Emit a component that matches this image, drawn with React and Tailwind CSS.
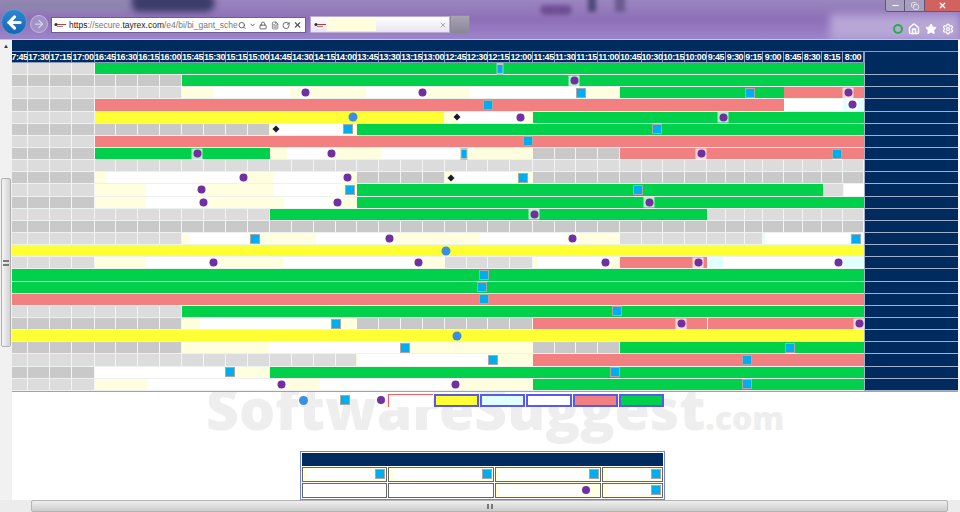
import React from 'react';
import { ArrowLeft, ArrowRight, Search, ChevronDown, Lock, FileText, RotateCw, X, Home, Star, Settings, Minus, Copy } from 'lucide-react';

const TIMES = ['7:45','17:30','17:15','17:00','16:45','16:30','16:15','16:00','15:45','15:30','15:15','15:00','14:45','14:30','14:15','14:00','13:45','13:30','13:15','13:00','12:45','12:30','12:15','12:00','11:45','11:30','11:15','11:00','10:45','10:30','10:15','10:00','9:45','9:30','9:15','9:00','8:45','8:30','8:15','8:00'];
const EDGES = [12,28,50,72,95,116,138,160,182,204,226,248,270,292,314,336,357,379,401,423,445,467,488,510,533,555,576,598,620,642,663,685,707,726,745,763,784,803,822,843,864];

const COLORS = {
  g: 'bg-[#00d04a]',
  r: 'bg-[#f28080]',
  y: 'bg-[#ffff33]',
  c: 'bg-[#ffffe0]',
  w: 'bg-white',
  a: 'bg-[#e0ffff]',
};

// each row: bars as [end x, colour] (x = grey cells), marks as [centre x, kind]
const ROWS = [
  { bars: [[95,'x'],[864,'g']], marks: [[500,'n']] },
  { bars: [[182,'x'],[864,'g']], marks: [[574,'p']] },
  { bars: [[182,'x'],[214,'c'],[290,'w'],[366,'c'],[418,'w'],[470,'c'],[576,'w'],[620,'c'],[784,'g'],[864,'r']], marks: [[305,'p'],[422,'p'],[581,'s'],[750,'s'],[848,'p']] },
  { bars: [[95,'x'],[784,'r'],[843,'w'],[864,'a']], marks: [[488,'s'],[852,'p']] },
  { bars: [[95,'x'],[444,'y'],[458,'c'],[524,'w'],[533,'c'],[864,'g']], marks: [[353,'b'],[457,'d'],[520,'p'],[723,'p']] },
  { bars: [[270,'x'],[273,'c'],[344,'w'],[357,'c'],[864,'g']], marks: [[276,'d'],[348,'s'],[657,'s']] },
  { bars: [[95,'x'],[864,'r']], marks: [[528,'s']] },
  { bars: [[95,'x'],[270,'g'],[287,'c'],[327,'w'],[381,'c'],[461,'w'],[533,'c'],[620,'x'],[864,'r']], marks: [[197,'p'],[331,'p'],[464,'n'],[701,'p'],[837,'s']] },
  { bars: [[864,'x']], marks: [] },
  { bars: [[95,'x'],[105,'c'],[240,'w'],[273,'c'],[342,'w'],[357,'c'],[445,'x'],[453,'c'],[516,'w'],[533,'c'],[864,'x']], marks: [[243,'p'],[347,'p'],[451,'d'],[523,'s']] },
  { bars: [[95,'x'],[146,'c'],[198,'w'],[273,'c'],[342,'w'],[357,'c'],[823,'g'],[864,'x']], marks: [[201,'p'],[350,'s'],[638,'s']] },
  { bars: [[95,'x'],[146,'c'],[198,'w'],[284,'c'],[332,'w'],[357,'c'],[864,'g']], marks: [[203,'p'],[337,'p'],[649,'p']] },
  { bars: [[270,'x'],[707,'g'],[864,'x']], marks: [[534,'p']] },
  { bars: [[864,'x']], marks: [] },
  { bars: [[182,'x'],[189,'c'],[250,'w'],[316,'c'],[385,'w'],[480,'c'],[565,'w'],[620,'c'],[763,'x'],[765,'a'],[850,'w'],[864,'a']], marks: [[255,'s'],[389,'p'],[572,'p'],[856,'s']] },
  { bars: [[864,'y']], marks: [[446,'b']] },
  { bars: [[95,'x'],[146,'c'],[208,'w'],[283,'c'],[412,'w'],[445,'c'],[533,'x'],[538,'c'],[600,'w'],[620,'c'],[707,'r'],[723,'a'],[835,'w'],[864,'a']], marks: [[213,'p'],[418,'p'],[605,'p'],[698,'p'],[838,'p']] },
  { bars: [[864,'g']], marks: [[484,'s']] },
  { bars: [[864,'g']], marks: [[482,'s']] },
  { bars: [[864,'r']], marks: [[484,'s']] },
  { bars: [[182,'x'],[864,'g']], marks: [[617,'s']] },
  { bars: [[182,'x'],[200,'c'],[330,'w'],[357,'c'],[533,'x'],[707,'r'],[708,'w'],[864,'r']], marks: [[336,'s'],[681,'p'],[859,'p']] },
  { bars: [[864,'y']], marks: [[457,'b']] },
  { bars: [[182,'x'],[269,'c'],[400,'w'],[533,'c'],[620,'x'],[864,'g']], marks: [[405,'s'],[790,'s']] },
  { bars: [[357,'x'],[360,'c'],[490,'w'],[533,'c'],[864,'r']], marks: [[493,'s'],[747,'s']] },
  { bars: [[95,'x'],[225,'w'],[270,'c'],[864,'g']], marks: [[230,'s'],[615,'s']] },
  { bars: [[95,'x'],[147,'c'],[275,'w'],[320,'c'],[450,'w'],[533,'c'],[864,'g']], marks: [[281,'p'],[455,'p'],[747,'s']] },
];

const Purple = () => (
  <span className="flex w-[11px] h-[11px] items-center justify-center bg-white/70">
    <span className="block w-[8px] h-[8px] rounded-full bg-[#7030a0]" />
  </span>
);
const Square = () => (
  <span className="flex w-[10px] h-[10px] items-center justify-center bg-[#a8a8a8]">
    <span className="block w-[8px] h-[8px] bg-[#00aef0]" />
  </span>
);
const Narrow = () => (
  <span className="flex w-[7px] h-[12px] items-center justify-center bg-[#c0c0c0]">
    <span className="block w-[5px] h-[8px] bg-[#00aef0]" />
  </span>
);
const BlueDot = () => <span className="block w-[9px] h-[9px] rounded-full bg-[#3b8fe3]" />;
const Diamond = () => <span className="block w-[5px] h-[5px] rotate-45 bg-[#1a1a2a]" />;

const MARKS = { p: Purple, s: Square, n: Narrow, b: BlueDot, d: Diamond };

const GanttRow = ({ row, index }) => {
  const lightGrey = index % 2 === 0;
  const pieces = [];
  let from = 12;
  row.bars.forEach(([to, kind]) => {
    if (kind === 'x') {
      EDGES.forEach((e, i) => {
        const next = EDGES[i + 1];
        if (next && e >= from && next <= to) {
          pieces.push(
            <div key={`x${e}`} className={`h-full border-r border-[#f4f4f4] ${lightGrey ? 'bg-[#dcdcdc]' : 'bg-[#c9c9c9]'}`} style={{ width: next - e }} />
          );
        }
      });
    } else {
      pieces.push(<div key={`b${to}`} className={`h-full ${COLORS[kind]}`} style={{ width: to - from }} />);
    }
    from = to;
  });

  return (
    <div className="flex h-[12.15px]">
      <div className="relative flex w-[852px] border-b border-[#eef2ee]">
        {pieces}
        {row.marks.map(([x, kind]) => {
          const Mark = MARKS[kind];
          return (
            <span key={x} className="absolute top-1/2 -translate-x-1/2 -translate-y-1/2" style={{ left: x - 12 }}>
              <Mark />
            </span>
          );
        })}
      </div>
      <div className="flex-1 bg-[#002b5e] border-l border-b border-[#a3b0cc]" />
    </div>
  );
};

const Favicon = () => (
  <svg width="12" height="6" viewBox="0 0 12 6" className="shrink-0">
    <circle cx="2" cy="2.5" r="1.6" fill="#333" />
    <path d="M3 2.5H12" stroke="#c0392b" strokeWidth="1" />
    <path d="M3 4.5H9" stroke="#888" strokeWidth="1" />
  </svg>
);

const BrowserBar = () => (
  <header className="relative flex h-[40px] shrink-0 items-end overflow-hidden border-b border-[#cdbfe6] bg-gradient-to-b from-[#9a86bf] via-[#8e6fb8] to-[#9d84c8] pb-[4px] pl-[1px]">
    {/* blurred desktop behind the glass */}
    <div className="absolute left-[130px] top-[-6px] h-[18px] w-[85px] rounded-full bg-[#3d3c69] blur-[3px]" />
    <div className="absolute left-[0px] top-[0px] h-[10px] w-[130px] bg-[#8c86a8] blur-[4px]" />
    <div className="absolute left-[540px] top-[5px] h-[10px] w-[32px] rounded-full bg-[#6f4f96] blur-[2px]" />
    <div className="absolute left-[588px] top-[-4px] h-[16px] w-[8px] bg-[#4d4a78] blur-[2px]" />
    <div className="absolute left-[615px] top-[-4px] h-[16px] w-[10px] bg-[#6a5a8c] blur-[2px]" />
    <div className="absolute right-[0px] top-[14px] h-[26px] w-[130px] bg-[#b7a6d6] blur-[4px]" />

    <div className="relative flex h-[26px] w-[26px] shrink-0 items-center justify-center rounded-full border border-[#5a9fd0] bg-gradient-to-b from-[#2f86cf] to-[#1766b4]">
      <ArrowLeft size={19} strokeWidth={4} className="text-white" />
    </div>
    <div className="relative mb-[2px] ml-[3px] flex h-[18px] w-[18px] shrink-0 items-center justify-center rounded-full border border-[#c4b6de] bg-[#a392c6]">
      <ArrowRight size={12} strokeWidth={2.5} className="text-[#d9d0ea]" />
    </div>
    <div className="relative mb-[2px] ml-[3px] flex h-[16px] w-[255px] shrink-0 items-center border border-[#6f5f90] bg-white pl-[2px] pr-[3px]">
      <Favicon />
      <span className="ml-[3px] w-[166px] shrink-0 whitespace-nowrap font-['Liberation_Sans',sans-serif] text-[8.5px] leading-none text-[#777]">
        <span className="text-[#222]">https</span>://secure.<span className="text-[#222]">tayrex.com</span>/e4/bi/bi_gant_sche
      </span>
      <Search size={9} strokeWidth={2.5} className="ml-[3px] text-[#555]" />
      <ChevronDown size={8} strokeWidth={3} className="ml-[3px] text-[#555]" />
      <Lock size={9} strokeWidth={2.5} className="ml-[3px] text-[#555]" />
      <FileText size={9} strokeWidth={2} className="ml-[3px] text-[#555]" />
      <RotateCw size={9} strokeWidth={2.5} className="ml-[3px] text-[#555]" />
      <X size={10} strokeWidth={3} className="ml-[3px] text-[#555]" />
    </div>
    <div className="relative mb-[2px] ml-[4px] flex h-[17px] w-[140px] shrink-0 items-center border border-[#b9acd6] bg-gradient-to-b from-white to-[#e8e4f2] pl-[3px] pr-[2px]">
      <Favicon />
      <div className="ml-[1px] h-[13px] w-[49px] bg-[#ffffe0]" />
      <X size={8} strokeWidth={3} className="ml-auto text-[#aaa]" />
    </div>
    <div className="relative mb-[1px] h-[19px] w-[20px] shrink-0 border border-[#8f88a4] bg-gradient-to-b from-[#a8a4b0] to-[#8a8698]" />

    <div className="absolute right-0 top-0 flex h-[12px] w-[75px] overflow-hidden rounded-bl-[3px] border-b border-l border-[#5e5878]">
      <div className="flex w-[19px] items-center justify-center border-r border-[#5e5878] bg-[#a89fc0]"><Minus size={9} strokeWidth={3} className="text-white" /></div>
      <div className="flex w-[20px] items-center justify-center border-r border-[#5e5878] bg-[#a89fc0]"><Copy size={8} strokeWidth={2} className="text-white" /></div>
      <div className="flex flex-1 items-center justify-center bg-[#d0625f]"><X size={9} strokeWidth={3.5} className="text-white" /></div>
    </div>
    <div className="absolute right-[6px] top-[23px] flex items-center gap-[5px]">
      <span className="block h-[10px] w-[10px] rounded-full border-2 border-[#22b14c]" />
      <Home size={12} strokeWidth={3} className="text-white" />
      <Star size={12} fill="white" className="text-white" />
      <Settings size={12} strokeWidth={2.5} className="text-white" />
    </div>
  </header>
);

const HeaderRow = () => (
  <div className="flex h-[12px] bg-[#002b5e]">
    {TIMES.map((t, i) => (
      <div
        key={t}
        className="flex items-center justify-center border border-l-0 border-[#8c9cbc] font-['Liberation_Sans',sans-serif] text-[9px] font-bold leading-none tracking-[-0.4px] text-white whitespace-nowrap"
        style={{ width: EDGES[i + 1] - EDGES[i] }}
      >
        {t}
      </div>
    ))}
    <div className="flex-1 border-t border-l border-[#8c9cbc]" />
  </div>
);

const LegendBox = ({ className }) => <div className={`h-[13px] w-[45px] border-2 border-[#5a5ae8] ${className}`} />;

const Legend = () => (
  <div className="ml-[287px] mt-[2px] flex items-center">
    <BlueDot />
    <span className="ml-[32px]"><Square /></span>
    <span className="ml-[25px]"><Purple /></span>
    <div className="ml-[2px] flex gap-[1px]">
      <div className="h-[13px] w-[45px] border-l border-t border-[#f06060] bg-white" />
      <LegendBox className="bg-[#ffff33]" />
      <LegendBox className="bg-[#e0ffff]" />
      <LegendBox className="w-[46px] bg-white" />
      <LegendBox className="bg-[#f28080]" />
      <LegendBox className="bg-[#00d04a]" />
    </div>
  </div>
);

const SummaryCell = ({ w, patch, mark, inset = 1 }) => {
  const Mark = mark ? MARKS[mark] : null;
  return (
    <div className={`flex h-[15px] items-center justify-end border border-[#666] ${patch ? 'bg-[#ffffe0]' : 'bg-white'}`} style={{ width: w, paddingRight: inset }}>
      {patch && <div className="mr-auto ml-[4px] h-[9px] flex-1 bg-white" />}
      {Mark && <Mark />}
    </div>
  );
};

const SummaryTable = () => (
  <div className="ml-[288px] mt-[44px] w-[365px] border border-[#6f86d6] p-[1px]">
    <div className="h-[13px] bg-[#002b5e]" />
    <div className="mt-[1px] flex gap-[1px]">
      <SummaryCell w={85} patch mark="s" />
      <SummaryCell w={106} patch mark="s" />
      <SummaryCell w={106} patch mark="s" />
      <SummaryCell w={61} patch mark="s" />
    </div>
    <div className="mt-[1px] flex gap-[1px]">
      <SummaryCell w={85} />
      <SummaryCell w={106} />
      <SummaryCell w={106} patch mark="p" inset={9} />
      <SummaryCell w={61} patch mark="s" />
    </div>
  </div>
);

const LeftScroll = () => (
  <div className="flex w-[12px] shrink-0 flex-col items-center bg-[#f1f1f1]">
    <span className="mt-[3px] text-[6px] leading-none text-[#333]">▲</span>
    <div className="mt-[129px] flex h-[169px] w-[10px] items-center justify-center rounded-[2px] border border-[#b0b0b0] bg-gradient-to-r from-[#f4f4f4] to-[#d4d4d4]">
      <span className="block h-[6px] w-[6px] border-y-2 border-[#777]" />
    </div>
  </div>
);

const App = () => (
  <div className="flex h-[512px] w-[960px] flex-col overflow-hidden bg-white">
    <BrowserBar />
    <div className="flex min-h-0 flex-1">
      <LeftScroll />
      <main className="relative w-[946px] shrink-0 overflow-hidden">
        <div className="absolute left-[194px] top-[340px] whitespace-nowrap font-['Open_Sans',sans-serif] font-extrabold leading-none text-[#eeeeee]">
          <span className="text-[57px]">SoftwareSuggest</span>
          <span className="text-[32px]">.com</span>
        </div>
        <div className="relative">
          <div className="h-[11px] bg-[#002b5e]" />
          <HeaderRow />
          {ROWS.map((row, i) => <GanttRow key={i} row={row} index={i} />)}
          <div className="h-px bg-[#8da0e0]" />
          <Legend />
          <SummaryTable />
        </div>
      </main>
    </div>
    <div className="flex h-[12px] shrink-0 items-center bg-[#ececec] pl-[31px] pr-[12px]">
      <div className="flex h-full flex-1 items-center justify-center rounded-[2px] border border-[#b4b4b4] bg-gradient-to-b from-[#efefef] to-[#cccccc]">
        <span className="block h-[5px] w-[6px] border-x-2 border-[#777]" />
      </div>
    </div>
  </div>
);

export default App;
